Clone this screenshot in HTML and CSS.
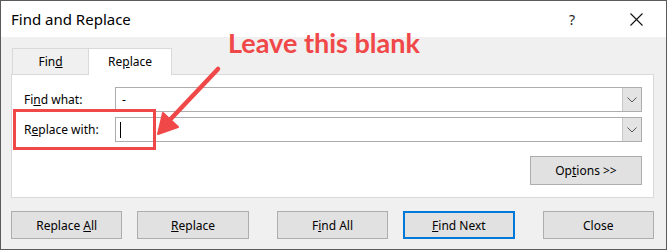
FILE: index.html
```html
<!DOCTYPE html>
<html>
<head>
<meta charset="utf-8">
<link rel="stylesheet" href="styles.css">
</head>
<body>
<div class="window">
  <div class="titlebar">
    <span class="title">Find and Replace</span>
    <span class="help">?</span>
    <span class="close-x">
      <svg width="13" height="13" viewBox="0 0 13 13"><path d="M0.5 0.5 L12.5 12.5 M12.5 0.5 L0.5 12.5" stroke="#111" stroke-width="1.1" fill="none"/></svg>
    </span>
  </div>
  <div class="body">
    <div class="tabs">
      <div class="tab">Fin<u>d</u></div>
      <div class="tab active">Re<u>p</u>lace</div>
    </div>
    <div class="panel">
      <div class="row">
        <label class="label">Fi<u>n</u>d what:</label>
        <div class="combo"><span class="value">-</span><span class="drop"><svg width="10" height="6" viewBox="0 0 10 6"><path d="M0.5 0.5 L5 5 L9.5 0.5" stroke="#555" fill="none"/></svg></span></div>
      </div>
      <div class="row">
        <label class="label">R<u>e</u>place with:</label>
        <div class="combo"><span class="caret"></span><span class="drop"><svg width="10" height="6" viewBox="0 0 10 6"><path d="M0.5 0.5 L5 5 L9.5 0.5" stroke="#555" fill="none"/></svg></span></div>
      </div>
      <div class="options-row">
        <button class="btn options">Op<u>t</u>ions &gt;&gt;</button>
      </div>
    </div>
    <div class="buttons">
      <button class="btn">Replace <u>A</u>ll</button>
      <button class="btn"><u>R</u>eplace</button>
      <button class="btn gap-left">F<u>i</u>nd All</button>
      <button class="btn default"><u>F</u>ind Next</button>
      <button class="btn gap-left2">Close</button>
    </div>
  </div>
  <div class="note">Leave this blank</div>
  <div class="redbox"></div>
  <svg class="arrow" width="80" height="80" viewBox="0 0 80 80">
    <path d="M66 12 L14 67" stroke="#f04848" stroke-width="4.5" stroke-linecap="round" fill="none"/>
    <path d="M6 77 L11 56 L26 70 Z" fill="#f04848" stroke="#f04848" stroke-width="2" stroke-linejoin="round"/>
  </svg>
</div>
</body>
</html>
```
FILE: styles.css
```css
* { box-sizing: border-box; }
html, body { margin: 0; padding: 0; background: #fff; }
.window {
  position: relative;
  width: 667px;
  height: 250px;
  border: 1px solid #5b5b5b;
  background: #f0f0f0;
  font-family: "Noto Sans", "Liberation Sans", sans-serif;
  font-size: 12px;
  color: #000;
  display: flex;
  flex-direction: column;
}
.titlebar {
  height: 36px;
  background: #fff;
  display: flex;
  align-items: center;
  padding-left: 10px;
  flex: none;
}
.title { font-size: 15px; flex: 1; margin-top: -1px; }
.help { font-size: 14px; width: 14px; margin-right: 47px; color: #222; }
.close-x { width: 13px; height: 13px; margin-right: 23px; display: flex; }
.body { padding: 10px 12px 0 10px; flex: 1; display: flex; flex-direction: column; }
.tabs { display: flex; align-items: flex-end; height: 27px; padding-left: 1px; }
.tab {
  height: 26px;
  width: 77px;
  border: 1px solid #d9d9d9;
  border-bottom: none;
  display: flex;
  align-items: center;
  justify-content: center;
  background: #f0f0f0;
}
.tab.active { height: 27px; width: 84px; background: #fff; margin-left: -1px; position: relative; top: 1px; z-index: 1; padding-bottom: 2px; }
.panel {
  background: #fff;
  border: 1px solid #d9d9d9;
  height: 124px;
  padding: 12px 11px 0 12px;
  display: flex;
  flex-direction: column;
  gap: 5px;
}
.row { display: flex; align-items: center; height: 25px; }
.label { width: 91px; }
.combo {
  flex: 1;
  height: 25px;
  border: 1px solid #adadad;
  display: flex;
  align-items: center;
  position: relative;
}
.value { padding-left: 6px; flex: 1; }
.caret { display: block; width: 1px; height: 16px; background: #000; margin-left: 4px; flex: none; }
.combo .caret + .drop { margin-left: auto; }
.drop {
  width: 19px;
  height: 23px;
  background: #e3e3e3;
  border-left: 1px solid #c8c8c8;
  display: flex;
  align-items: center;
  justify-content: center;
}
.options-row { display: flex; justify-content: flex-end; margin-top: 9px; }
.btn {
  font-family: inherit;
  font-size: 12px;
  color: #000;
  background: #e1e1e1;
  border: 1px solid #adadad;
  width: 112px;
  height: 28px;
  padding: 0;
  margin: 0;
}
.options { width: 112px; height: 29px; }
.buttons { display: flex; margin-top: 13px; gap: 15px; padding-left: 0; }
.buttons .gap-left { margin-left: 13px; }
.buttons .default { border: 2px solid #0078d7; }
.buttons .gap-left2 { margin-left: 13px; }
.note {
  position: absolute;
  left: 227px;
  top: 24px;
  font-family: Lato, sans-serif;
  font-weight: bold;
  font-size: 27px;
  color: #f04848;
  line-height: 36px;
  white-space: nowrap;
}
.redbox {
  position: absolute;
  left: 12px;
  top: 108px;
  width: 143px;
  height: 41px;
  border: 3px solid #f04848;
}
.arrow { position: absolute; left: 151px; top: 56px; }
```
